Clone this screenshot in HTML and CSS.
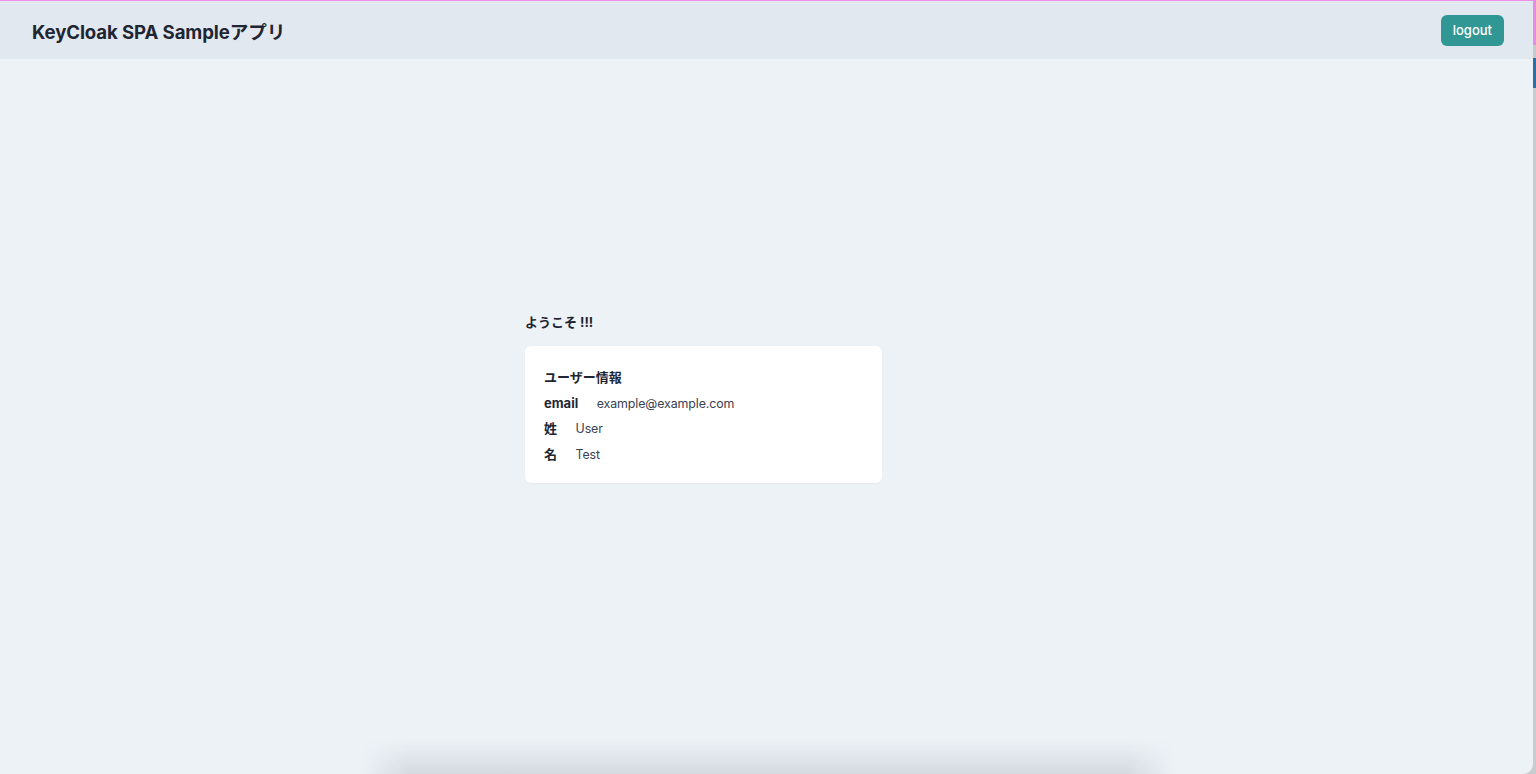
FILE: index.html
```html
<!DOCTYPE html>
<html lang="ja">
<head>
<meta charset="utf-8">
<title>KeyCloak SPA Sampleアプリ</title>
<link rel="stylesheet" href="styles.css">
</head>
<body>
<div class="app">
  <header class="header">
    <h1 class="title">KeyCloak SPA Sampleアプリ</h1>
    <button class="logout" type="button">logout</button>
  </header>
  <main class="main">
    <section class="welcome">
      <h2 class="greeting">ようこそ !!!</h2>
      <div class="card">
        <h3 class="card-title">ユーザー情報</h3>
        <div class="row"><span class="label">email</span><span class="value">example@example.com</span></div>
        <div class="row"><span class="label">姓</span><span class="value">User</span></div>
        <div class="row"><span class="label">名</span><span class="value">Test</span></div>
      </div>
    </section>
  </main>
</div>
<div class="edge-strip"></div>
<div class="top-line"></div>
<div class="dock-shadow"></div>
</body>
</html>
```
FILE: styles.css
```css
* { box-sizing: border-box; }
html, body {
  margin: 0;
  height: 100%;
}
body {
  font-family: Inter, "Noto Sans CJK JP", sans-serif;
  color: #1a202c;
  background: #c9cbce;
  overflow: hidden;
  position: relative;
}
.app {
  height: 100%;
  width: calc(100% - 3px);
  background: #edf2f7;
  border-bottom-right-radius: 10px;
  display: flex;
  flex-direction: column;
}
.header {
  height: 59px;
  flex: 0 0 auto;
  background: #e2e8f0;
  display: flex;
  align-items: center;
  justify-content: space-between;
  padding: 1px 29px 0 32px;
}
.title {
  margin: 0;
  font-size: 18.6px;
  font-weight: 700;
  color: #1f2633;
  letter-spacing: -0.1px;
}
.logout {
  height: 31px;
  padding: 0 12px;
  border: none;
  border-radius: 6px;
  background: #319795;
  color: #ffffff;
  font-family: inherit;
  font-size: 13px;
  font-weight: 500;
}
.main {
  flex: 1 1 auto;
  display: flex;
  justify-content: center;
  padding-top: 251px;
  padding-left: 3px;
}
.welcome {
  width: 486px;
  display: flex;
  flex-direction: column;
  align-items: flex-start;
}
.greeting {
  margin: 0 0 12px;
  font-size: 13px;
  font-weight: 700;
  line-height: 24px;
  color: #1f2633;
}
.card {
  width: 357px;
  background: #ffffff;
  border-radius: 6px;
  box-shadow: 0 1px 2px rgba(0, 0, 0, 0.04);
  padding: 19px 19px 17px;
  display: flex;
  flex-direction: column;
  gap: 1.5px;
}
.card-title {
  margin: 0;
  font-size: 13px;
  font-weight: 700;
  line-height: 24px;
  color: #1f2633;
}
.row {
  display: flex;
  align-items: flex-start;
  gap: 18.5px;
  font-size: 13px;
  line-height: 24px;
}
.label {
  font-weight: 700;
  color: #1f2633;
}
.value {
  font-size: 12.4px;
  line-height: 23px;
  padding-top: 1px;
  letter-spacing: -0.1px;
  color: #3a4150;
}
.edge-strip {
  position: absolute;
  top: 0;
  right: 0;
  width: 3px;
  height: 100%;
  background: linear-gradient(to bottom, #e98be0 0, #e98be0 45px, #c7c9cc 45px, #c7c9cc 58px, #2f6fa8 58px, #2f6fa8 88px, #c9cbce 88px);
}
.top-line {
  position: absolute;
  top: 0;
  left: 0;
  right: 0;
  height: 1px;
  background: #f08ee6;
}
.dock-shadow {
  position: absolute;
  left: 360px;
  width: 816px;
  bottom: 0;
  height: 36px;
  background: linear-gradient(to bottom, rgba(40, 50, 60, 0) 0, rgba(40, 50, 60, 0.05) 45%, rgba(40, 50, 60, 0.13) 100%);
  -webkit-mask-image: linear-gradient(to right, transparent 0, #000 50px, #000 calc(100% - 50px), transparent 100%);
  mask-image: linear-gradient(to right, transparent 0, #000 50px, #000 calc(100% - 50px), transparent 100%);
}
```
